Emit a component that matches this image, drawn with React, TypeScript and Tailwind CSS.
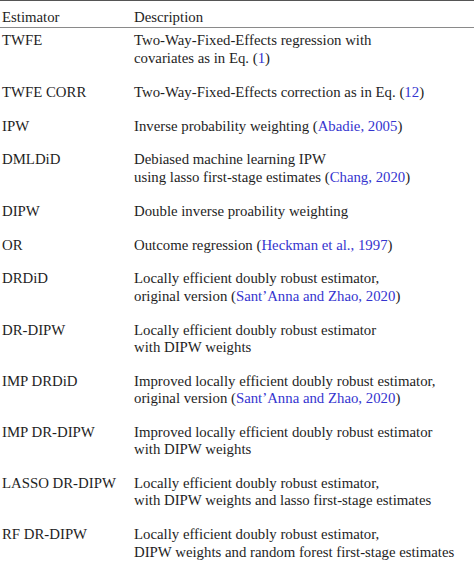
const L = ({ children }: { children: React.ReactNode }) => (
  <span className="text-[#3535cf]">{children}</span>
);

const rows: { name: string; desc: React.ReactNode[] }[] = [
  {
    name: "TWFE",
    desc: [
      "Two-Way-Fixed-Effects regression with",
      <>covariates as in Eq. (<L>1</L>)</>,
    ],
  },
  {
    name: "TWFE CORR",
    desc: [<>Two-Way-Fixed-Effects correction as in Eq. (<L>12</L>)</>],
  },
  {
    name: "IPW",
    desc: [<>Inverse probability weighting (<L>Abadie, 2005</L>)</>],
  },
  {
    name: "DMLDiD",
    desc: [
      "Debiased machine learning IPW",
      <>using lasso first-stage estimates (<L>Chang, 2020</L>)</>,
    ],
  },
  { name: "DIPW", desc: ["Double inverse proability weighting"] },
  {
    name: "OR",
    desc: [<>Outcome regression (<L>Heckman et al., 1997</L>)</>],
  },
  {
    name: "DRDiD",
    desc: [
      "Locally efficient doubly robust estimator,",
      <>original version (<L>Sant’Anna and Zhao, 2020</L>)</>,
    ],
  },
  {
    name: "DR-DIPW",
    desc: ["Locally efficient doubly robust estimator", "with DIPW weights"],
  },
  {
    name: "IMP DRDiD",
    desc: [
      "Improved locally efficient doubly robust estimator,",
      <>original version (<L>Sant’Anna and Zhao, 2020</L>)</>,
    ],
  },
  {
    name: "IMP DR-DIPW",
    desc: [
      "Improved locally efficient doubly robust estimator",
      "with DIPW weights",
    ],
  },
  {
    name: "LASSO DR-DIPW",
    desc: [
      "Locally efficient doubly robust estimator,",
      "with DIPW weights and lasso first-stage estimates",
    ],
  },
  {
    name: "RF DR-DIPW",
    desc: [
      "Locally efficient doubly robust estimator,",
      "DIPW weights and random forest first-stage estimates",
    ],
  },
];

export default function App() {
  return (
    <div className="w-[474px] h-[576px] overflow-hidden bg-white text-[#1e1e1e] [font-family:Liberation_Serif,serif] text-[14.8px] leading-[17.3px] flex flex-col">
      <div className="h-[3px] bg-[#c9c9c9]" />
      <div className="border-t border-[#555]" />
      <div className="grid grid-cols-[132px_1fr] pl-[2px] pt-[8px] pb-[1px] border-b border-[#8a8a8a]">
        <div>Estimator</div>
        <div>Description</div>
      </div>
      <div className="pt-[4.2px] flex-1">
        {rows.map((r) => (
          <div key={r.name} className="grid grid-cols-[132px_1fr] pl-[2px] pb-[16.6px]">
            <div>{r.name}</div>
            <div className="whitespace-nowrap">
              {r.desc.map((d, i) => (
                <div key={i}>{d}</div>
              ))}
            </div>
          </div>
        ))}
      </div>
      <div className="h-[3px] bg-[#f3f3f3] shrink-0" />
    </div>
  );
}
